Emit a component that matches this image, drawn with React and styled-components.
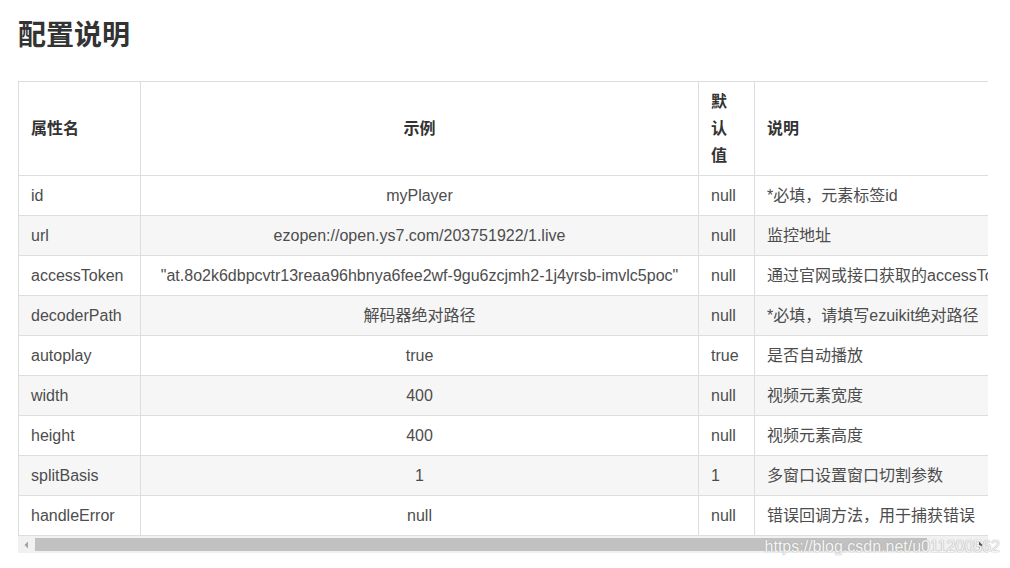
import React from "react";
import styled, { createGlobalStyle } from "styled-components";

const Global = createGlobalStyle`
  html, body { margin: 0; padding: 0; background: #fff; }
  body { font-family: "Liberation Sans", Arial, "Noto Sans CJK SC", sans-serif; color: #4d4d4d; }
`;

const Page = styled.div`
  position: relative;
  width: 1010px;
  height: 568px;
  padding: 0 22px 0 18px;
  box-sizing: border-box;
  overflow: hidden;
`;

const Title = styled.h2`
  margin: 13px 0 28px;
  font-family: "Noto Sans CJK SC", sans-serif;
  font-size: 28px;
  line-height: 40px;
  font-weight: 700;
  color: #333;
`;

const Scroller = styled.div`
  width: 970px;
  overflow: hidden;
`;

const Table = styled.table`
  border-collapse: collapse;
  table-layout: fixed;
  width: 1019px;
`;

const Th = styled.th`
  border: 1px solid #dddddd;
  padding: 6px 12px;
  line-height: 27px;
  font-size: 16px;
  font-weight: 700;
  color: #333;
  font-family: "Liberation Sans", "Noto Sans CJK SC", sans-serif;
  text-align: ${(p) => (p.$center ? "center" : "left")};
  vertical-align: middle;
`;

const Row = styled.tr`
  background: ${(p) => (p.$alt ? "#f6f6f6" : "#fff")};
`;

const Td = styled.td`
  border: 1px solid #dddddd;
  padding: 8px 12px;
  line-height: 23px;
  font-size: 16px;
  color: #4d4d4d;
  white-space: nowrap;
  overflow: hidden;
  font-family: "Liberation Sans", "Noto Sans CJK SC", sans-serif;
  text-align: ${(p) => (p.$center ? "center" : "left")};
`;

const ScrollBar = styled.div`
  display: flex;
  width: 970px;
  height: 17px;
  background: #f1f1f1;
`;

const Arrow = styled.div`
  width: 17px;
  height: 17px;
  display: flex;
  align-items: center;
  justify-content: center;
`;

const Track = styled.div`
  flex: 1;
  display: flex;
  align-items: center;
`;

const Thumb = styled.div`
  height: 13px;
  background: #c1c1c1;
`;

const Watermark = styled.div`
  position: absolute;
  right: 10px;
  top: 536px;
  font-family: "Liberation Sans", Arial, sans-serif;
  font-size: 16px;
  line-height: 22px;
  color: rgba(255, 255, 255, 0.9);
  text-shadow: 0 0 1px #a8a8a8, 0 0 1px #a8a8a8;
`;

const rows = [
  ["id", "myPlayer", "null", "*必填，元素标签id"],
  ["url", "ezopen://open.ys7.com/203751922/1.live", "null", "监控地址"],
  [
    "accessToken",
    "\"at.8o2k6dbpcvtr13reaa96hbnya6fee2wf-9gu6zcjmh2-1j4yrsb-imvlc5poc\"",
    "null",
    "通过官网或接口获取的accessToken",
  ],
  ["decoderPath", "解码器绝对路径", "null", "*必填，请填写ezuikit绝对路径"],
  ["autoplay", "true", "true", "是否自动播放"],
  ["width", "400", "null", "视频元素宽度"],
  ["height", "400", "null", "视频元素高度"],
  ["splitBasis", "1", "1", "多窗口设置窗口切割参数"],
  ["handleError", "null", "null", "错误回调方法，用于捕获错误"],
];

export default function App() {
  return (
    <Page>
      <Global />
      <Title>配置说明</Title>
      <Scroller>
        <Table>
          <colgroup>
            <col style={{ width: 122 }} />
            <col style={{ width: 558 }} />
            <col style={{ width: 56 }} />
            <col style={{ width: 283 }} />
          </colgroup>
          <thead>
            <tr>
              <Th>属性名</Th>
              <Th $center>示例</Th>
              <Th>默认值</Th>
              <Th>说明</Th>
            </tr>
          </thead>
          <tbody>
            {rows.map((r, i) => (
              <Row key={r[0]} $alt={i % 2 === 1}>
                <Td>{r[0]}</Td>
                <Td $center>{r[1]}</Td>
                <Td>{r[2]}</Td>
                <Td>{r[3]}</Td>
              </Row>
            ))}
          </tbody>
        </Table>
      </Scroller>
      <ScrollBar>
        <Arrow>
          <svg width="8" height="8" viewBox="0 0 8 8">
            <path d="M5 0.5 L1.5 4 L5 7.5 Z" fill="#a3a3a3" />
          </svg>
        </Arrow>
        <Track>
          <Thumb style={{ width: 892 }} />
        </Track>
        <Arrow>
          <svg width="8" height="8" viewBox="0 0 8 8">
            <path d="M3 0.5 L6.5 4 L3 7.5 Z" fill="#505050" />
          </svg>
        </Arrow>
      </ScrollBar>
      <Watermark>https://blog.csdn.net/u011200562</Watermark>
    </Page>
  );
}
